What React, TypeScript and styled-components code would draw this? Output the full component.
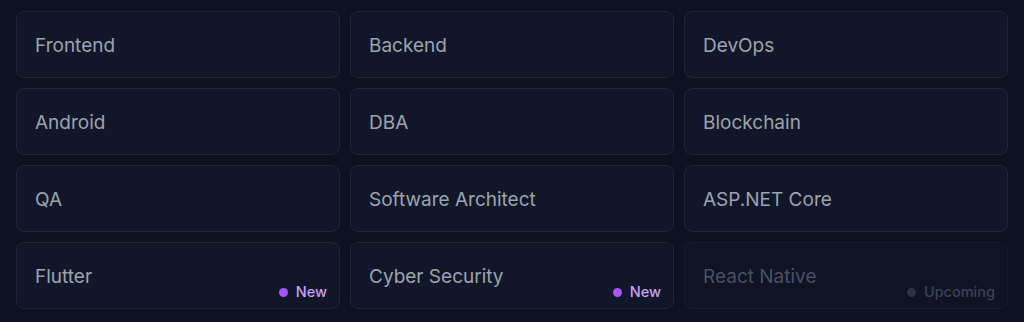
import React from 'react';
import styled, { createGlobalStyle } from 'styled-components';

const GlobalStyle = createGlobalStyle`
  html, body {
    margin: 0;
    padding: 0;
    background: #0d1220;
    font-family: Inter, "Noto Sans", sans-serif;
  }
`;

type Status = 'new' | 'upcoming' | undefined;

interface Track {
  title: string;
  status?: Status;
}

const tracks: Track[] = [
  { title: 'Frontend' },
  { title: 'Backend' },
  { title: 'DevOps' },
  { title: 'Android' },
  { title: 'DBA' },
  { title: 'Blockchain' },
  { title: 'QA' },
  { title: 'Software Architect' },
  { title: 'ASP.NET Core' },
  { title: 'Flutter', status: 'new' },
  { title: 'Cyber Security', status: 'new' },
  { title: 'React Native', status: 'upcoming' },
];

const Grid = styled.div`
  display: grid;
  grid-template-columns: repeat(3, 1fr);
  gap: 10px;
  padding: 11px 16px 13px;
`;

const Card = styled.a<{ $muted?: boolean }>`
  position: relative;
  display: flex;
  align-items: center;
  height: 67px;
  box-sizing: border-box;
  padding: 2px 18px 0;
  border: 1px solid ${(p) => (p.$muted ? '#161c2b' : '#1f2636')};
  border-radius: 8px;
  background: ${(p) => (p.$muted ? '#0f1424' : '#111729')};
  color: ${(p) => (p.$muted ? '#475063' : '#9ca3af')};
  font-size: 19px;
  text-decoration: none;
`;

const Badge = styled.span<{ $kind: 'new' | 'upcoming' }>`
  position: absolute;
  right: 12px;
  bottom: 7px;
  display: flex;
  align-items: center;
  gap: 8px;
  font-size: 14.5px;
  line-height: 18px;
  font-weight: 500;
  color: ${(p) => (p.$kind === 'new' ? '#c9a1f7' : '#3b4352')};
`;

const Dot = styled.span<{ $kind: 'new' | 'upcoming' }>`
  width: 9px;
  height: 9px;
  border-radius: 50%;
  background: ${(p) => (p.$kind === 'new' ? '#a855f7' : '#2b3240')};
`;

const App = () => {
  return (
    <>
      <GlobalStyle />
      <Grid>
        {tracks.map((t) => (
          <Card key={t.title} href="#" $muted={t.status === 'upcoming'}>
            {t.title}
            {t.status && (
              <Badge $kind={t.status}>
                <Dot $kind={t.status} />
                {t.status === 'new' ? 'New' : 'Upcoming'}
              </Badge>
            )}
          </Card>
        ))}
      </Grid>
    </>
  );
};

export default App;
